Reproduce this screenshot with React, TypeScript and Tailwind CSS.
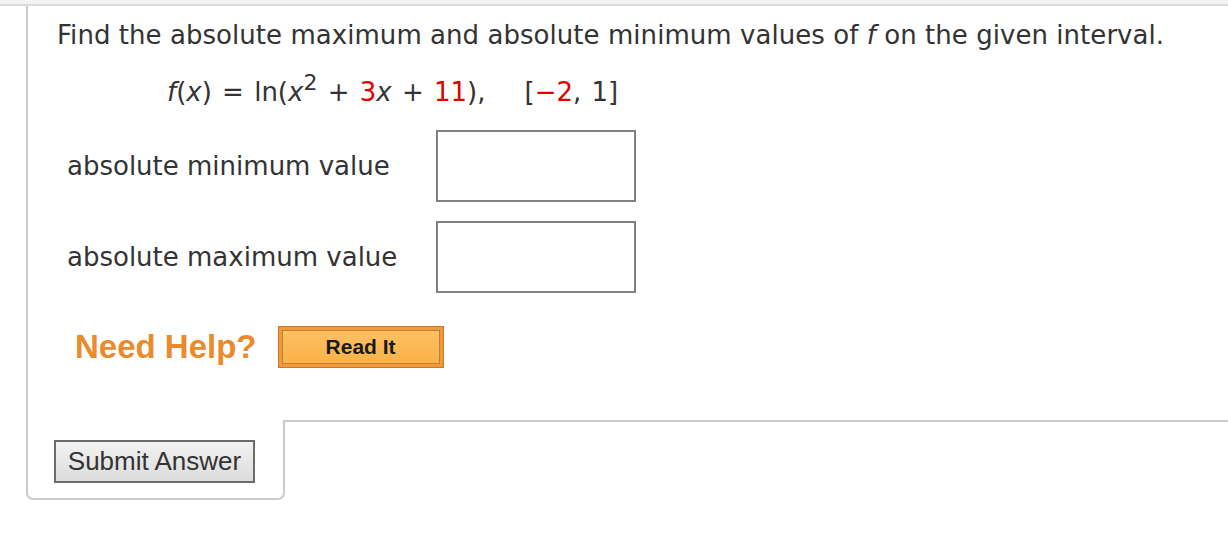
import React from 'react';

const verdana = { fontFamily: '"DejaVu Sans", Verdana, sans-serif' };
const arial = { fontFamily: '"Liberation Sans", Arial, sans-serif' };

const AnswerRow: React.FC<{ label: string; className?: string }> = ({ label, className }) => (
  <div className={`flex items-center ${className ?? ''}`}>
    <div className="ml-[10px] w-[369px] text-[26px] leading-[30px] text-[#333]">{label}</div>
    <div className="w-[200px] h-[72px] border-2 border-[#808080] bg-white"></div>
  </div>
);

const App: React.FC = () => {
  return (
    <div className="w-[1228px] h-[536px] bg-white overflow-hidden" style={verdana}>
      <div className="h-[4px] bg-[#f3f3f3]"></div>
      <div className="border-t-2 border-[#dcdcdc]">
        {/* question body */}
        <div className="ml-[26px] border-l-2 border-[#cccccc] pl-[29px] pt-[14px] pb-[52px] text-[#333]">
          <p className="text-[26px] leading-[30px] tracking-[0.05px]">
            Find the absolute maximum and absolute minimum values of <i>f</i> on the given interval.
          </p>

          <div className="ml-[110px] mt-[27px] text-[26px] leading-[30px] whitespace-pre [word-spacing:2px]">
            <i>f</i>(<i>x</i>) = ln(<i>x</i>
            <sup className="text-[22px] relative -top-[11px]">2</sup> + <span className="text-[#e00000]">3</span>
            <i>x</i> + <span className="text-[#e00000]">11</span>),
            <span className="ml-[39px]">[</span>
            <span className="text-[#e00000]">−2</span>, 1]
          </div>

          <AnswerRow label="absolute minimum value" className="mt-[23px]" />
          <AnswerRow label="absolute maximum value" className="mt-[19px]" />

          <div className="flex items-center mt-[33px]">
            <span className="ml-[18px] text-[33px] leading-[40px] font-bold text-[#eb8a2a]" style={arial}>
              Need Help?
            </span>
            <button
              className="ml-[21px] w-[166px] h-[42px] bg-[#f19a36] border border-[#c9782c] p-[3px]"
              style={arial}
            >
              <div className="w-full h-full border border-[#b8803f] bg-gradient-to-b from-[#fdc063] to-[#fbb147] flex items-center justify-center text-[21px] font-bold text-[#1a1a1a]">
                Read It
              </div>
            </button>
          </div>
        </div>

        {/* submit tab */}
        <div className="flex ml-[26px]">
          <div className="w-[259px] border-l-2 border-r-2 border-b-2 border-[#cccccc] rounded-b-[7px] pl-[26px] pt-[20px] pb-[15px]">
            <button
              className="w-[201px] h-[43px] border-2 border-[#6b6b6b] bg-gradient-to-b from-[#f2f2f2] to-[#dcdcdc] text-[26px] text-[#333]"
              style={arial}
            >
              Submit Answer
            </button>
          </div>
          <div className="flex-1 border-t-2 border-[#cccccc]"></div>
        </div>
      </div>
    </div>
  );
};

export default App;
